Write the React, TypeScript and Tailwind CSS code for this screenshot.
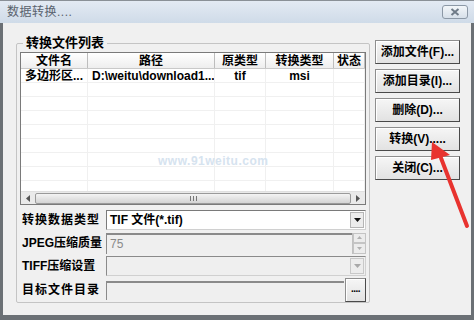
import React from "react";

const font = { fontFamily: '"Liberation Sans", "Noto Sans CJK SC", sans-serif' };

const columns = [
  { label: "文件名", w: "w-[67px]" },
  { label: "路径", w: "w-[127px]" },
  { label: "原类型", w: "w-[51px]" },
  { label: "转换类型", w: "w-[68px]" },
  { label: "状态", w: "flex-1" },
];

const rows = [["多边形区...", "D:\\weitu\\download1...", "tif", "msi", ""]];

function Btn({ children, className = "" }: { children: React.ReactNode; className?: string }) {
  return (
    <button
      className={`h-[24px] flex items-center justify-center bg-gradient-to-b from-[#f6f6f6] to-[#e2e2e2] border border-[#8e8e8e] border-r-[#4a4a4a] border-b-[#4a4a4a] shadow-[inset_1px_1px_0_#ffffff] text-[12px] font-bold text-black ${className}`}
    >
      {children}
    </button>
  );
}

function ArrowDown({ light }: { light?: boolean }) {
  return (
    <svg width="7" height="4" viewBox="0 0 7 4">
      <path d="M0 0h7L3.5 4z" fill={light ? "#a8a8a8" : "#111"} />
    </svg>
  );
}

export default function App() {
  return (
    <div className="w-[474px] h-[320px] bg-[#6b7075] flex flex-col px-[3px] pb-[5px] overflow-hidden" style={font}>
      {/* title bar */}
      <div className="h-[23px] shrink-0 -mx-[3px] px-[7px] bg-gradient-to-b from-[#e3eaf3] to-[#cfdbe8] border-t border-[#8a9097] flex items-center justify-between">
        <span className="text-[12px] text-[#59626d] tracking-[0.5px]">数据转换....</span>
        <div className="w-[26px] h-[14px] mr-[-1px] rounded-[3px] border border-[#8c98a6] bg-gradient-to-b from-[#f3f6f9] to-[#d7e0ea] flex items-center justify-center">
          <svg width="10" height="8" viewBox="0 0 10 8">
            <path d="M1.5 1l7 6M8.5 1l-7 6" stroke="#6f7b88" strokeWidth="2" />
          </svg>
        </div>
      </div>

      {/* body */}
      <div className="flex-1 bg-[#f0f0f0] relative flex pl-[13px] pt-[13px]">
        <fieldset className="w-[352px] h-[267px] border border-[#c4c4c4] rounded-[2px] px-[3px] pb-[3px]">
          <legend className="ml-[3px] px-[3px] text-[13px] font-bold leading-[14px] text-black">转换文件列表</legend>

          {/* list view */}
          <div className="w-[346px] h-[153px] mt-[2px] border border-[#7a7a7a] bg-white flex flex-col">
            <div className="h-[16px] shrink-0 flex bg-gradient-to-b from-[#ffffff] to-[#eeeeee] border-b border-[#c9c9c9]">
              {columns.map((c) => (
                <div
                  key={c.label}
                  className={`${c.w} shrink-0 border-r border-[#bdbdbd] flex items-center justify-center text-[12px] font-bold leading-[14px]`}
                >
                  {c.label}
                </div>
              ))}
            </div>
            <div className="flex-1 relative overflow-hidden">
              {Array.from({ length: 9 }).map((_, i) => (
                <div key={i} className="h-[14px] flex border-b border-[#f0f0f0]">
                  {columns.map((c, j) => (
                    <div
                      key={j}
                      className={`${c.w} shrink-0 border-r border-[#f0f0f0] flex items-center text-[12px] font-bold leading-[14px] whitespace-nowrap overflow-hidden ${
                        j < 2 ? "pl-[4px]" : "justify-center"
                      }`}
                    >
                      {rows[i]?.[j] ?? ""}
                    </div>
                  ))}
                </div>
              ))}
              <span className="absolute left-[137px] top-[83px] text-[12px] font-bold text-[#d6e3ef] tracking-[0.5px]">
                www.91weitu.com
              </span>
            </div>
            {/* horizontal scrollbar */}
            <div className="h-[13px] shrink-0 flex items-center bg-[#eaeaea] border-t border-[#e0e0e0]">
              <div className="w-[14px] flex justify-center">
                <svg width="4" height="7" viewBox="0 0 4 7">
                  <path d="M4 0v7L0 3.5z" fill="#555" />
                </svg>
              </div>
              <div className="flex-1 h-[11px] rounded-[2px] border border-[#9a9a9a] bg-gradient-to-b from-[#f4f4f4] to-[#d4d4d4] flex items-center justify-center">
                <svg width="7" height="5" viewBox="0 0 7 5">
                  <path d="M0.5 0v5M3.5 0v5M6.5 0v5" stroke="#777" strokeWidth="1" />
                </svg>
              </div>
              <div className="w-[14px] flex justify-center">
                <svg width="4" height="7" viewBox="0 0 4 7">
                  <path d="M0 0v7L4 3.5z" fill="#555" />
                </svg>
              </div>
            </div>
          </div>

          {/* settings rows */}
          <div className="mt-[5px] flex flex-col gap-[3px] text-[12px] font-bold">
            <div className="flex items-center h-[20px]">
              <span className="w-[86px] pl-[2px] tracking-[1px]">转换数据类型</span>
              <div className="flex-1 h-[20px] bg-white border border-[#7a7a7a] border-r-[#d0d0d0] border-b-[#d0d0d0] flex items-center">
                <span className="flex-1 pl-[3px] font-bold">TIF 文件(*.tif)</span>
                <div className="w-[14px] h-[16px] mr-[1px] bg-[#ececec] border border-[#b5b5b5] flex items-center justify-center">
                  <ArrowDown />
                </div>
              </div>
            </div>
            <div className="flex items-center h-[20px]">
              <span className="w-[86px] pl-[2px]">JPEG压缩质量</span>
              <div className="flex-1 h-[21px] flex">
                <div className="flex-1 bg-[#efefef] border-t-2 border-l border-[#8a8a8a] flex items-center pl-[3px] font-normal text-[#8a8a8a]">
                  75
                </div>
                <div className="w-[14px] flex flex-col border-l border-[#c0c0c0]">
                  <div className="flex-1 bg-[#ececec] border border-[#c4c4c4] flex items-center justify-center">
                    <svg width="5" height="3" viewBox="0 0 5 3">
                      <path d="M0 3h5L2.5 0z" fill="#b0b0b0" />
                    </svg>
                  </div>
                  <div className="flex-1 bg-[#ececec] border border-[#c4c4c4] flex items-center justify-center">
                    <svg width="5" height="3" viewBox="0 0 5 3">
                      <path d="M0 0h5L2.5 3z" fill="#b0b0b0" />
                    </svg>
                  </div>
                </div>
              </div>
            </div>
            <div className="flex items-center h-[20px]">
              <span className="w-[86px] pl-[2px]">TIFF压缩设置</span>
              <div className="flex-1 h-[20px] bg-[#efefef] border border-[#8a8a8a] border-r-[#d0d0d0] border-b-[#d0d0d0] flex items-center justify-end">
                <div className="w-[14px] h-[16px] mr-[1px] bg-[#ececec] border border-[#c8c8c8] flex items-center justify-center">
                  <ArrowDown light />
                </div>
              </div>
            </div>
            <div className="flex items-center h-[20px] mt-[1px]">
              <span className="w-[86px] pl-[2px] tracking-[1px]">目标文件目录</span>
              <div className="flex-1 h-[19px] bg-[#efefef] border-t-2 border-l border-[#8a8a8a]" />
              <Btn className="w-[21px] h-[21px] ml-[1px]">
                <span className="text-[10px] leading-none tracking-[-0.5px] -mt-[2px]">....</span>
              </Btn>
            </div>
          </div>
        </fieldset>

        {/* side buttons */}
        <div className="ml-[5px] mt-[4px] w-[85px] flex flex-col gap-[5px]">
          <Btn>添加文件(F)...</Btn>
          <Btn>添加目录(I)...</Btn>
          <Btn>删除(D)...</Btn>
          <Btn>转换(V).....</Btn>
          <Btn>关闭(C)...</Btn>
        </div>

        {/* red annotation arrow */}
        <svg className="absolute left-0 top-0 pointer-events-none" width="471" height="292" viewBox="0 0 471 292">
          <path d="M464 203 L438 135" stroke="#e8332f" strokeWidth="4" strokeLinecap="round" />
          <path d="M429 119 L447 132 L428 137 z" fill="#e8332f" />
        </svg>
      </div>
    </div>
  );
}
